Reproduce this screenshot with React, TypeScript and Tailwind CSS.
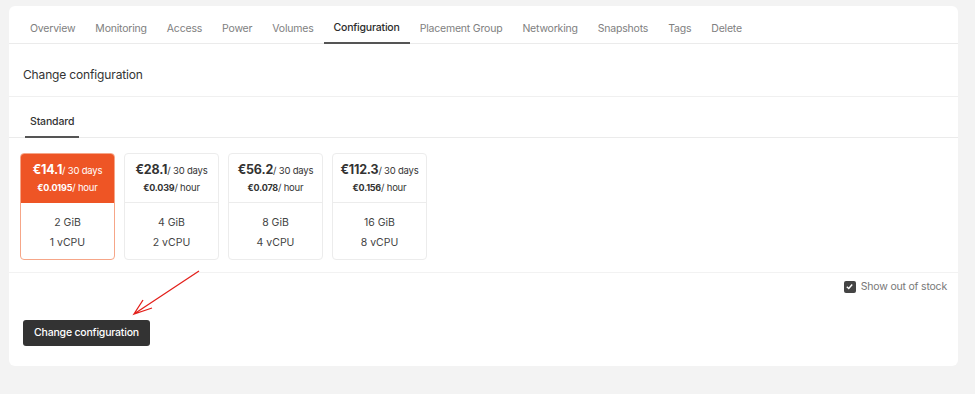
import React from "react";

const tabs = ["Overview","Monitoring","Access","Power","Volumes","Configuration","Placement Group","Networking","Snapshots","Tags","Delete"];

const plans = [
  { price: "€14.1", hour: "€0.0195", ram: "2 GiB", cpu: "1 vCPU", selected: true },
  { price: "€28.1", hour: "€0.039", ram: "4 GiB", cpu: "2 vCPU" },
  { price: "€56.2", hour: "€0.078", ram: "8 GiB", cpu: "4 vCPU" },
  { price: "€112.3", hour: "€0.156", ram: "16 GiB", cpu: "8 vCPU" },
];

export default function App() {
  return (
    <div className="relative h-[394px] w-[975px] bg-[#f3f3f3] pt-[6px] pl-[9px]" style={{ fontFamily: "Inter, 'Noto Sans', sans-serif" }}>
      <div className="w-[949px] h-[360px] rounded-md bg-white flex flex-col">
        <div className="flex h-[38px] border-b border-[#ebebeb] pl-[11px]">
          {tabs.map((t) => (
            <div key={t} className={`px-[10px] flex items-center pt-[8px] text-[10.5px] tracking-[-0.2px] ${t === "Configuration" ? "text-[#2c2c2c] font-medium border-b-2 border-[#555] -mb-px" : "text-[#808080]"}`}>
              {t}
            </div>
          ))}
        </div>
        <div className="h-[53px] border-b border-[#f0f0f0] flex items-center pl-[14px] pt-[10px] text-[12px] tracking-[-0.15px] text-[#333]">
          Change configuration
        </div>
        <div className="h-[41px] border-b border-[#ebebeb] flex pl-[16px]">
          <div className="px-[5px] flex items-center pt-[11px] text-[10.5px] tracking-[-0.15px] font-medium text-[#333] border-b-2 border-[#555] -mb-px">Standard</div>
        </div>
        <div className="flex gap-[9px] pl-[11px] pt-[15px] pb-[12px] border-b border-[#f2f2f2]">
          {plans.map((p) => (
            <div key={p.price} className={`w-[95px] h-[107px] rounded-[4px] border flex flex-col overflow-hidden ${p.selected ? "border-[#f6a688]" : "border-[#ececec]"}`}>
              <div className={`h-[49px] flex flex-col items-center justify-center border-b pb-[2px] ${p.selected ? "bg-[#ee5525] text-white border-[#ee5525]" : "text-[#333] border-[#ececec]"}`}>
                <div className="leading-[16px] tracking-[-0.2px]"><span className="text-[12.5px] font-bold">{p.price}</span><span className="text-[9.5px]">/ 30 days</span></div>
                <div className="leading-[12px] tracking-[-0.2px]"><span className="text-[9px] font-bold">{p.hour}</span><span className="text-[9.5px]">/ hour</span></div>
              </div>
              <div className="flex-1 flex flex-col items-center justify-center gap-[6px] text-[10.5px] leading-[14px] text-[#444] pt-[3px]">
                <div>{p.ram}</div>
                <div>{p.cpu}</div>
              </div>
            </div>
          ))}
        </div>
        <div className="flex justify-end pr-[11px] pt-[6px]">
          <div className="flex items-center gap-[5px]">
            <div className="w-[12px] h-[12px] rounded-[2px] bg-[#444] flex items-center justify-center">
              <svg width="9" height="9" viewBox="0 0 10 10"><path d="M2 5.2 L4.2 7.3 L8 2.8" stroke="white" strokeWidth="1.6" fill="none" /></svg>
            </div>
            <span className="text-[10.5px] tracking-[-0.2px] text-[#777]">Show out of stock</span>
          </div>
        </div>
        <div className="pl-[14px] pt-[23px]">
          <button className="h-[26px] w-[127px] rounded-[3px] bg-[#333] text-white text-[10.5px] tracking-[-0.2px] font-medium">Change configuration</button>
        </div>
      </div>
      <svg className="absolute left-0 top-0 pointer-events-none" width="975" height="394">
        <path d="M199 271 L134 314 M143 300 L134 314 L152 308" stroke="#e3201b" strokeWidth="1.3" fill="none" />
      </svg>
    </div>
  );
}
